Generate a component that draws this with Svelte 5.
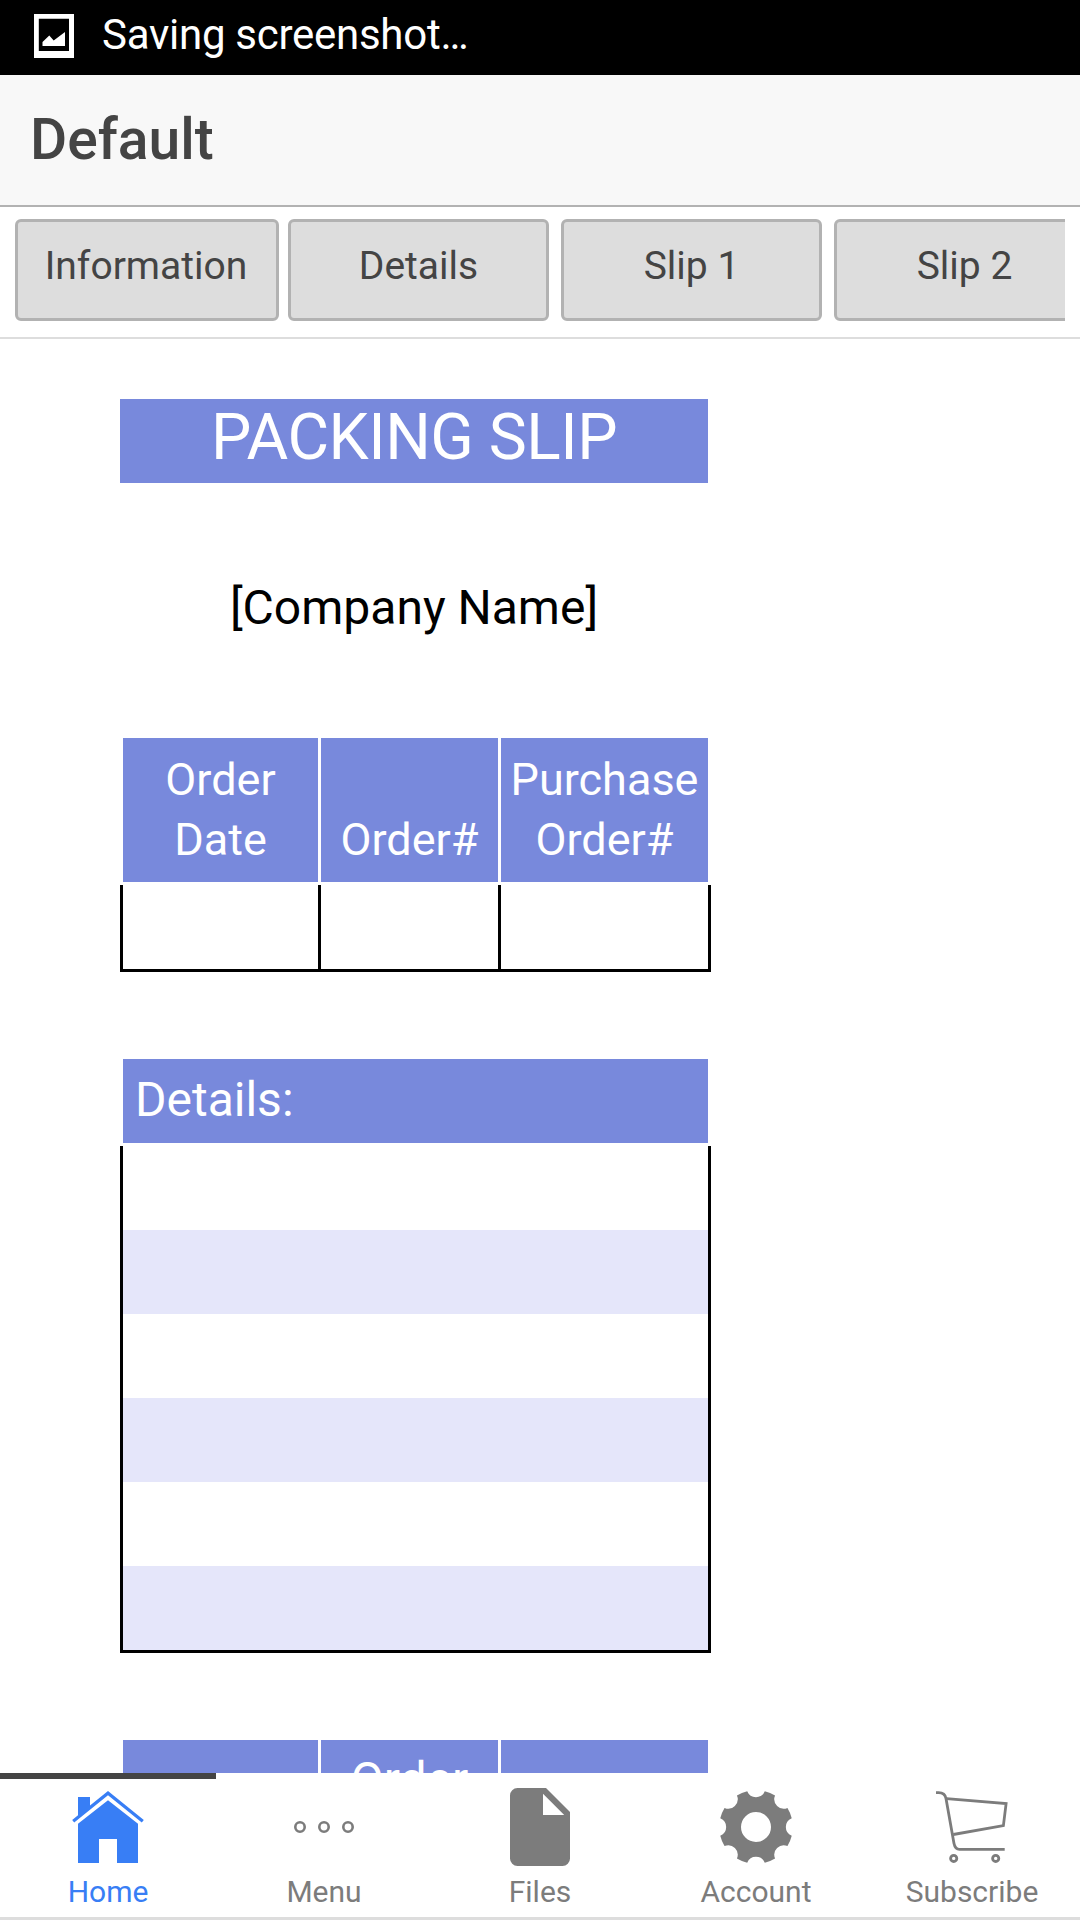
<script lang="ts">
  type Tab = { id: string; label: string };

  const sheets = ['Information', 'Details', 'Slip 1', 'Slip 2'];
  const orderColumns = ['Order Date', 'Order#', 'Purchase Order#'];
  const itemColumns = ['', 'Order', ''];
  const detailRows = [0, 1, 2, 3, 4, 5];

  const tabs: Tab[] = [
    { id: 'home', label: 'Home' },
    { id: 'menu', label: 'Menu' },
    { id: 'files', label: 'Files' },
    { id: 'account', label: 'Account' },
    { id: 'subscribe', label: 'Subscribe' },
  ];

  let activeSheet = $state('Slip 1');
  let activeTab = $state('home');

  // cog outline: eight teeth separated by round notches, plus the centre hole
  const cogPath = (c: number, outer: number, notch: number, hole: number) => {
    const half = Math.asin((notch * 0.925) / outer);
    const at = (a: number) =>
      `${(c + outer * Math.cos(a)).toFixed(2)} ${(c + outer * Math.sin(a)).toFixed(2)}`;
    let d = `M${at(-half)}`;
    for (let i = 0; i < 8; i++) {
      const a = (i * Math.PI) / 4;
      d += `A${notch} ${notch} 0 0 0 ${at(a + half)}`;
      d += `A${outer} ${outer} 0 0 1 ${at(a + Math.PI / 4 - half)}`;
    }
    return `${d}ZM${c - hole} ${c}a${hole} ${hole} 0 1 0 ${hole * 2} 0a${hole} ${hole} 0 1 0 ${-hole * 2} 0Z`;
  };
</script>

<div class="screen">
  <div class="status">
    <svg class="status__icon" viewBox="0 0 40 44">
      <path fill="#fff" fill-rule="evenodd" d="M0 0H40V44H0ZM4.8 4.8V37H35V4.8Z" />
      <path fill="#fff" d="M8.5 32V28L15.3 21.5L19.7 26.5L31 18V32Z" />
    </svg>
    <span class="status__text">Saving screenshot…</span>
  </div>

  <header class="header">
    <h1>Default</h1>
  </header>

  <nav class="sheets">
    <div class="sheets__track">
      {#each sheets as sheet}
        <button class="sheets__button" onclick={() => (activeSheet = sheet)}>{sheet}</button>
      {/each}
    </div>
  </nav>

  <main class="slip">
    <div class="slip__title">PACKING SLIP</div>
    <div class="slip__company">[Company Name]</div>

    <div class="grid grid--order">
      {#each orderColumns as column}
        <div class="grid__head"><span>{column}</span></div>
      {/each}
      {#each orderColumns as _}
        <div class="grid__cell"></div>
      {/each}
    </div>

    <div class="details">
      <div class="details__head">Details:</div>
      <div class="details__body">
        {#each detailRows as row}
          <div class="details__row" class:details__row--alt={row % 2 === 1}></div>
        {/each}
      </div>
    </div>

    <div class="grid grid--items">
      {#each itemColumns as column}
        <div class="grid__head"><span>{column}</span></div>
      {/each}
    </div>
  </main>

  <footer class="tabs">
    {#each tabs as tab}
      <button
        class="tabs__item"
        class:tabs__item--active={activeTab === tab.id}
        onclick={() => (activeTab = tab.id)}
      >
        <svg class="tabs__icon" viewBox="0 0 84 84">
          {#if tab.id === 'home'}
            <path fill="currentColor" d="M12 12H24V20.5L42 6L77.8 35L75.8 37.4L42 10.2L8.2 37.4L6.2 35L12 30.3Z" />
            <path fill="currentColor" d="M42 15.2L72 38.8V78H51V54H33V78H12V38.8Z" />
          {:else if tab.id === 'menu'}
            <g fill="none" stroke="currentColor" stroke-width="2.6">
              <circle cx="18" cy="42" r="4.7" />
              <circle cx="42" cy="42" r="4.7" />
              <circle cx="66" cy="42" r="4.7" />
            </g>
          {:else if tab.id === 'files'}
            <path
              fill="currentColor"
              fill-rule="evenodd"
              d="M19.5 3H48L72 27V73.5A7.5 7.5 0 0 1 64.5 81H19.5A7.5 7.5 0 0 1 12 73.5V10.5A7.5 7.5 0 0 1 19.5 3ZM45 8.7V30H66.2Z"
            />
          {:else if tab.id === 'account'}
            <path fill="currentColor" fill-rule="evenodd" d={cogPath(42, 36.8, 9.5, 15)} />
          {:else}
            <g fill="none" stroke="currentColor" stroke-width="2.8">
              <path d="M6 7.6H8.5C13 7.6 15.3 9 16 13.5L24 58.5C24.8 62.5 26 64.4 29.5 64.4H74.7" />
              <path d="M16.5 13.6L76.1 18.6L73.4 40.6L23.3 49.5" />
              <circle cx="23.7" cy="73.4" r="3.1" />
              <circle cx="65.7" cy="73.4" r="3.1" />
            </g>
          {/if}
        </svg>
        <span class="tabs__label">{tab.label}</span>
      </button>
    {/each}
  </footer>
</div>

<style>
  :global(body) {
    margin: 0;
    background: #fff;
  }

  .screen {
    display: flex;
    flex-direction: column;
    width: 1080px;
    height: 1920px;
    overflow: hidden;
    background: #fff;
    font-family: Roboto, sans-serif;
    color: #444;
  }

  button {
    margin: 0;
    font-family: inherit;
    cursor: pointer;
  }

  .status {
    display: flex;
    flex: none;
    gap: 28px;
    box-sizing: border-box;
    height: 75px;
    padding: 14px 34px 0;
    background: #000;
    color: #fff;
  }

  .status__icon {
    width: 40px;
    height: 44px;
  }

  .status__text {
    font-size: 42px;
    line-height: 42px;
    letter-spacing: -0.27px;
  }

  .header {
    display: flex;
    flex: none;
    align-items: center;
    box-sizing: border-box;
    height: 132px;
    padding: 0 30px;
    border-bottom: 2px solid #b2b2b2;
    background: #f8f8f8;
  }

  h1 {
    margin: 0;
    font-size: 57px;
    font-weight: 500;
    line-height: 60px;
  }

  .sheets {
    flex: none;
    box-sizing: border-box;
    height: 132px;
    padding: 12px 15px 0;
    border-bottom: 2px solid #ddd;
  }

  .sheets__track {
    display: flex;
    gap: 12px;
    overflow: hidden;
  }

  .sheets__button {
    flex: none;
    box-sizing: border-box;
    width: 261px;
    height: 102px;
    padding: 0 0 9px;
    border: 3px solid #b2b2b2;
    border-radius: 6px;
    background: #ddd;
    color: #444;
    font-size: 39px;
    line-height: 48px;
  }

  .sheets__button:first-child {
    width: 264px;
    margin-right: -3px;
    padding-right: 2px;
  }

  .slip {
    flex: 1;
    min-height: 0;
    padding: 60px 0 0 120px;
    overflow: hidden;
  }

  .slip__title {
    width: 588px;
    height: 84px;
    background: #7889dc;
    color: #fff;
    font-size: 64px;
    line-height: 77px;
    letter-spacing: -0.5px;
    text-align: center;
  }

  .slip__company {
    width: 588px;
    padding: 96px 0 102px;
    color: #000;
    font-size: 48px;
    line-height: 57px;
    text-align: center;
  }

  .grid {
    display: grid;
    grid-template-columns: 198px 180px 210px;
    width: 591px;
  }

  .grid__head {
    display: flex;
    align-items: flex-end;
    justify-content: center;
    box-sizing: border-box;
    height: 144px;
    margin-left: 3px;
    padding-bottom: 12px;
    background: #7889dc;
    color: #fff;
    font-size: 45px;
    line-height: 60px;
    text-align: center;
  }

  .grid__cell {
    box-sizing: border-box;
    height: 87px;
    margin-top: 3px;
    border: solid #000;
    border-width: 0 0 3px 3px;
  }

  .grid__cell:last-child {
    margin-right: -3px;
    border-right-width: 3px;
  }

  .details {
    width: 591px;
    margin: 87px 0;
  }

  .details__head {
    height: 84px;
    margin: 0 3px;
    padding-left: 12px;
    background: #7889dc;
    color: #fff;
    font-size: 48px;
    line-height: 81px;
  }

  .details__body {
    margin-top: 3px;
    border: solid #000;
    border-width: 0 3px 3px;
  }

  .details__row {
    height: 84px;
  }

  .details__row--alt {
    background: #e5e6fa;
  }

  .grid--items .grid__head {
    align-items: flex-start;
    padding: 10px 0 0;
    font-size: 48px;
  }

  .tabs {
    display: flex;
    flex: none;
    box-sizing: border-box;
    height: 147px;
    border-bottom: 3px solid #ddd;
    background: #fff;
  }

  .tabs__item {
    display: flex;
    flex: 1;
    flex-direction: column;
    align-items: center;
    padding: 6px 0 0;
    border: 0;
    border-top: 6px solid transparent;
    background: none;
    color: #7c7c7c;
  }

  .tabs__item--active {
    border-top-color: #444;
    color: #387ef5;
  }

  .tabs__icon {
    width: 84px;
    height: 84px;
  }

  .tabs__label {
    margin-top: 5px;
    font-size: 30px;
    line-height: 36px;
  }
</style>
